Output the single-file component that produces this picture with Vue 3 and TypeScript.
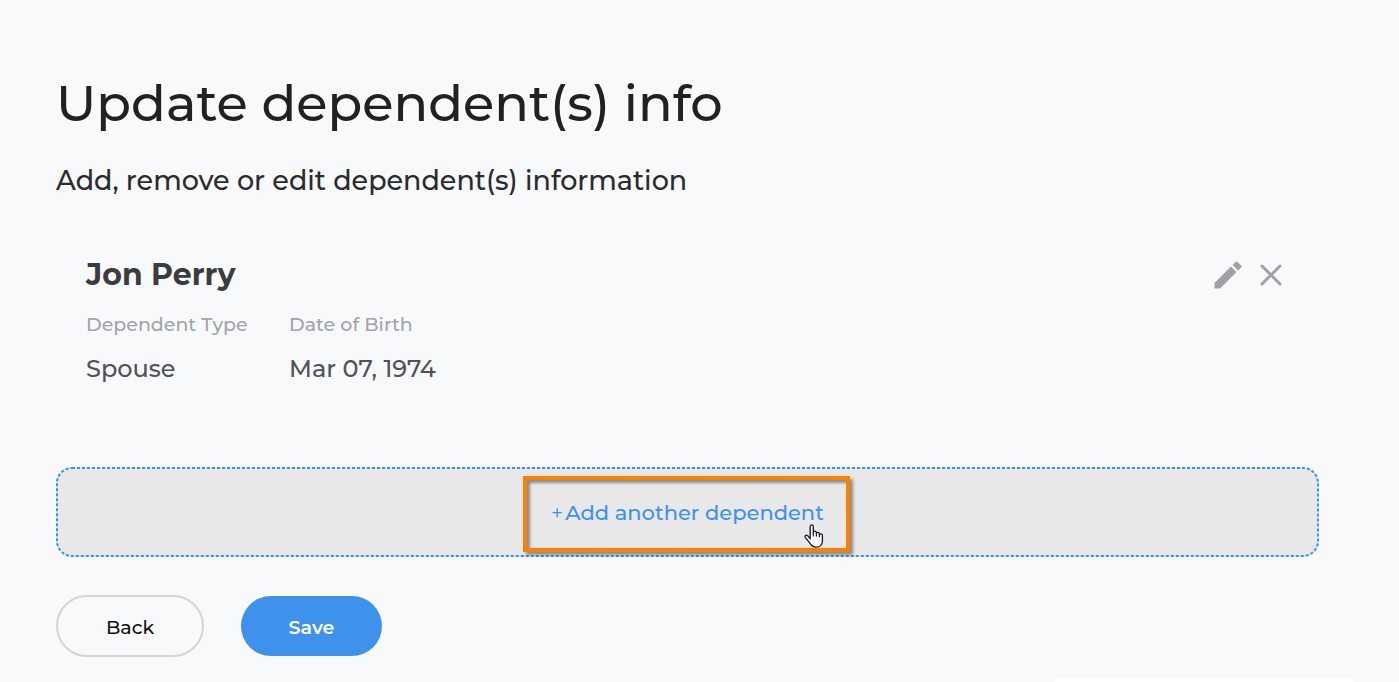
<script setup lang="ts">
import { ref } from 'vue'

interface Dependent {
  id: number
  name: string
  type: string
  born: string
}

const dependents = ref<Dependent[]>([
  { id: 1, name: 'Jon Perry', type: 'Spouse', born: 'Mar 07, 1974' },
])

function remove(id: number): void {
  dependents.value = dependents.value.filter((d) => d.id !== id)
}
</script>

<template>
  <main class="page">
    <h1 class="title">Update dependent(s) info</h1>
    <p class="subtitle">Add, remove or edit dependent(s) information</p>

    <section v-for="d in dependents" :key="d.id" class="card">
      <header class="card-head">
        <h2 class="name">{{ d.name }}</h2>
        <div class="actions">
          <button type="button" class="icon-button" :aria-label="`Edit ${d.name}`">
            <svg width="28" height="28" viewBox="0 0 28 28" aria-hidden="true">
              <path
                fill="#9ea1a7"
                d="M0.5 27.5v-5.6L16.9 5.5l5.6 5.6L6.1 27.5zM18.5 3.9l3-3q1-1 2 0l3.6 3.6q1 1 0 2l-3 3z"
              />
            </svg>
          </button>
          <button type="button" class="icon-button" :aria-label="`Remove ${d.name}`" @click="remove(d.id)">
            <svg width="22" height="22" viewBox="0 0 22 22" aria-hidden="true">
              <path
                fill="none"
                stroke="#9ea1a7"
                stroke-width="3"
                stroke-linecap="round"
                d="M2 2l18 18M20 2L2 20"
              />
            </svg>
          </button>
        </div>
      </header>
      <dl class="facts">
        <div>
          <dt>Dependent Type</dt>
          <dd>{{ d.type }}</dd>
        </div>
        <div>
          <dt>Date of Birth</dt>
          <dd>{{ d.born }}</dd>
        </div>
      </dl>
    </section>

    <button type="button" class="add">
      <svg class="outline" aria-hidden="true">
        <rect x="1" y="1" rx="15" />
      </svg>
      <span class="add-label">
        <span class="plus">+</span>Add another dependent
        <span class="highlight"></span>
        <svg class="pointer" width="20" height="24" viewBox="0 0 20 24" aria-hidden="true">
          <path
            fill="#fff"
            stroke="#14142b"
            stroke-width="1.3"
            stroke-linejoin="round"
            d="M6.2 14.8V2.6c0-2.2 3.1-2.2 3.1 0v5.8c.2-1.8 3-1.8 3.1.4v.7c.4-1.6 3-1.4 3 .6v.6c.5-1.4 3-1.2 3 .8v5.2c0 4-2.6 6.4-5.9 6.4-3.5 0-5-1.2-6.8-4.2l-4.4-5.6c-1-1.5.9-2.9 2.3-1.6z"
          />
          <path fill="none" stroke="#14142b" stroke-width="1.2" d="M9.3 8v4.6M12.4 9v3.6M15.4 10v3" />
        </svg>
      </span>
    </button>

    <div class="footer">
      <button type="button" class="pill back">Back</button>
      <button type="button" class="pill save">Save</button>
    </div>

    <div class="dock"></div>
  </main>
</template>

<style>
body {
  margin: 0;
  background: #f8f9fb;
}
</style>

<style scoped>
.page {
  box-sizing: border-box;
  padding: 71px 80px 24px 56px;
  font-family: Montserrat, Inter, 'Liberation Sans', sans-serif;
  color: #212121;
}

button {
  font-family: inherit;
  cursor: pointer;
}

.title {
  margin: 0;
  font-size: 51px;
  line-height: 64px;
  font-weight: 500;
}

.subtitle {
  margin: 28px 0 0;
  font-size: 27px;
  line-height: 36px;
  font-weight: 500;
  color: #2a2b2d;
}

.card {
  margin-top: 56px;
  padding: 0 37px 0 30px;
}

.card-head {
  display: flex;
  align-items: center;
  justify-content: space-between;
}

.name {
  margin: 0;
  font-size: 30px;
  line-height: 40px;
  font-weight: 700;
  color: #3c3c3c;
}

.actions {
  display: flex;
  align-items: center;
  gap: 18px;
}

.icon-button {
  display: flex;
  padding: 0;
  border: 0;
  background: none;
}

.facts {
  display: grid;
  grid-template-columns: minmax(165px, max-content) max-content;
  gap: 38px;
  margin: 18px 0 0;
}

dt {
  font-size: 19px;
  line-height: 24px;
  font-weight: 500;
  color: #a2a4a9;
}

dd {
  margin: 16px 0 0;
  font-size: 24px;
  line-height: 32px;
  font-weight: 500;
  color: #515257;
}

.add {
  position: relative;
  display: block;
  box-sizing: border-box;
  width: 100%;
  margin-top: 82px;
  padding: 34px 0 32px;
  border: 0;
  border-radius: 16px;
  background: #e8e8e8;
  color: #3f92ec;
  font-size: 21px;
  line-height: 24px;
  font-weight: 500;
}

.outline {
  position: absolute;
  inset: 0;
  width: 100%;
  height: 100%;
}

.outline rect {
  width: calc(100% - 2px);
  height: calc(100% - 2px);
  fill: none;
  stroke: #3f92ec;
  stroke-width: 2px;
  stroke-dasharray: 3 2;
}

.add-label {
  position: relative;
  display: inline-block;
}

.plus {
  margin-right: 2px;
  font-weight: 400;
}

.highlight {
  position: absolute;
  inset: -25px -26px -27px -28px;
  border: 4px solid #ff8000;
  box-shadow:
    3px 3px 3px rgba(0, 0, 0, 0.4),
    inset 3px 3px 3px rgba(0, 0, 0, 0.4);
}

.pointer {
  position: absolute;
  right: 0;
  bottom: -23px;
}

.footer {
  display: flex;
  align-items: center;
  gap: 37px;
  margin-top: 38px;
}

.pill {
  box-sizing: border-box;
  font-size: 19px;
  line-height: 24px;
  border-radius: 31px;
}

.back {
  min-width: 148px;
  padding: 19px 24px 15px;
  border: 2px solid #d3d4d6;
  background: transparent;
  color: #111;
  font-weight: 500;
}

.save {
  min-width: 141px;
  padding: 20px 24px 16px;
  border: 0;
  background: #3f92ec;
  color: #fff;
  font-weight: 600;
}

.dock {
  position: fixed;
  right: 45px;
  bottom: 0;
  width: 300px;
  height: 3px;
  border-radius: 8px 8px 0 0;
  background: #fff;
}
</style>
